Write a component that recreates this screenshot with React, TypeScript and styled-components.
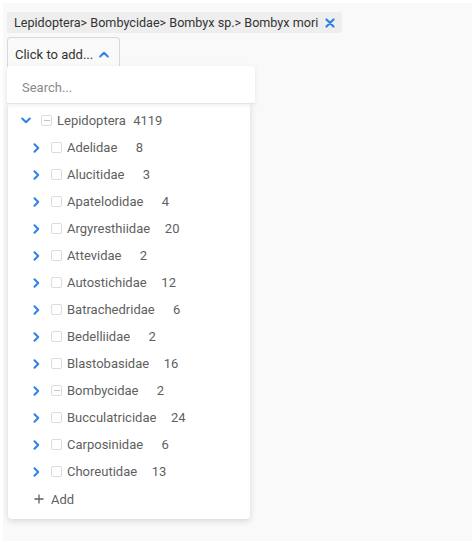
import React from "react";
import styled, { createGlobalStyle } from "styled-components";

const Global = createGlobalStyle`
  html, body { margin: 0; padding: 0; background: #ffffff; }
  body { font-family: Roboto, "Liberation Sans", Arial, sans-serif; }
  * { box-sizing: border-box; }
`;

const Page = styled.div`
  margin: 3px;
  min-height: 538px;
  width: 469px;
  background: #f9f9f9;
  padding: 9px 4px 0 4px;
  display: flex;
  flex-direction: column;
  align-items: flex-start;
`;

const Chip = styled.div`
  display: flex;
  align-items: center;
  height: 21px;
  padding: 0 7px;
  background: #eeeeee;
  border-radius: 2px;
  font-size: 12.6px;
  color: #333;
  gap: 7px;
  white-space: nowrap;
`;

const Dropdown = styled.div`
  margin-top: 4px;
  display: flex;
  flex-direction: column;
  align-items: flex-start;
`;

const Trigger = styled.div`
  height: 31px;
  width: 113px;
  border: 1px solid #d8d8d8;
  border-bottom: none;
  border-radius: 4px 4px 0 0;
  background: #f9f9f9;
  display: flex;
  align-items: center;
  padding: 3px 0 0 7px;
  gap: 6px;
  font-size: 13px;
  color: #333;
  white-space: nowrap;
`;

const SearchBox = styled.div`
  margin-top: -2px;
  width: 248px;
  height: 38px;
  background: #fff;
  border-radius: 3px 3px 0 0;
  border-bottom: 1px solid #e4e4e4;
  box-shadow: 0 1px 4px rgba(0, 0, 0, 0.08);
  display: flex;
  align-items: center;
  padding: 5px 15px 0 15px;
  font-size: 13px;
  color: #8a8a8a;
  position: relative;
  z-index: 1;
`;

const TreePanel = styled.div`
  margin-left: 1px;
  width: 242px;
  background: #fff;
  border-radius: 0 0 4px 4px;
  box-shadow: 0 2px 6px rgba(0, 0, 0, 0.14);
  padding: 3px 0 6px 0;
  display: flex;
  flex-direction: column;
`;

const Row = styled.div<{ $depth: number }>`
  height: 27px;
  display: flex;
  align-items: center;
  padding-left: ${(p) => 12 + p.$depth * 10}px;
  font-size: 13px;
  color: #5f5f5f;
`;

const Toggle = styled.span`
  width: 12px;
  height: 12px;
  display: flex;
  align-items: center;
  justify-content: center;
`;

const Box = styled.span<{ $partial?: boolean }>`
  width: 11px;
  height: 11px;
  margin-left: 9px;
  border: 1px solid #dcdcdc;
  border-radius: 2px;
  background: #fff;
  display: flex;
  align-items: center;
  justify-content: center;
  &::after {
    content: "";
    display: ${(p) => (p.$partial ? "block" : "none")};
    width: 6px;
    height: 1px;
    background: #c4c4c4;
  }
`;

const Name = styled.span`
  margin-left: 5px;
`;

const Count = styled.span`
  margin-left: 7px;
  min-width: 30px;
  text-align: center;
`;

const AddRow = styled.div`
  height: 28px;
  display: flex;
  align-items: center;
  padding-left: 26px;
  gap: 7px;
  font-size: 13px;
  color: #5f5f5f;
`;

const BLUE = "#2f80ed";

const ChevronRight = () => (
  <svg width="7" height="10" viewBox="0 0 7 10">
    <path d="M1.5 1.2 L5.2 5 L1.5 8.8" fill="none" stroke={BLUE} strokeWidth="2" strokeLinecap="round" strokeLinejoin="round" />
  </svg>
);

const ChevronDown = () => (
  <svg width="10" height="7" viewBox="0 0 10 7">
    <path d="M1.2 1.5 L5 5.2 L8.8 1.5" fill="none" stroke={BLUE} strokeWidth="2" strokeLinecap="round" strokeLinejoin="round" />
  </svg>
);

const ChevronUp = () => (
  <svg width="10" height="7" viewBox="0 0 10 7">
    <path d="M1.2 5.5 L5 1.8 L8.8 5.5" fill="none" stroke={BLUE} strokeWidth="2" strokeLinecap="round" strokeLinejoin="round" />
  </svg>
);

const Cross = () => (
  <svg width="10" height="10" viewBox="0 0 10 10">
    <path d="M1.5 1.5 L8.5 8.5 M8.5 1.5 L1.5 8.5" stroke={BLUE} strokeWidth="2.2" strokeLinecap="round" />
  </svg>
);

const Plus = () => (
  <svg width="10" height="10" viewBox="0 0 10 10">
    <path d="M5 0.5 V9.5 M0.5 5 H9.5" stroke="#5f5f5f" strokeWidth="1.3" />
  </svg>
);

const families: { name: string; count: number; partial?: boolean }[] = [
  { name: "Adelidae", count: 8 },
  { name: "Alucitidae", count: 3 },
  { name: "Apatelodidae", count: 4 },
  { name: "Argyresthiidae", count: 20 },
  { name: "Attevidae", count: 2 },
  { name: "Autostichidae", count: 12 },
  { name: "Batrachedridae", count: 6 },
  { name: "Bedelliidae", count: 2 },
  { name: "Blastobasidae", count: 16 },
  { name: "Bombycidae", count: 2, partial: true },
  { name: "Bucculatricidae", count: 24 },
  { name: "Carposinidae", count: 6 },
  { name: "Choreutidae", count: 13 },
];

export default function App() {
  return (
    <>
      <Global />
      <Page>
        <Chip>
          <span>Lepidoptera&gt; Bombycidae&gt; Bombyx sp.&gt; Bombyx mori</span>
          <Cross />
        </Chip>
        <Dropdown>
          <Trigger>
            <span>Click to add...</span>
            <ChevronUp />
          </Trigger>
          <SearchBox>Search...</SearchBox>
          <TreePanel>
            <Row $depth={0}>
              <Toggle>
                <ChevronDown />
              </Toggle>
              <Box $partial />
              <Name>Lepidoptera</Name>
              <Count>4119</Count>
            </Row>
            {families.map((f) => (
              <Row $depth={1} key={f.name}>
                <Toggle>
                  <ChevronRight />
                </Toggle>
                <Box $partial={f.partial} />
                <Name>{f.name}</Name>
                <Count>{f.count}</Count>
              </Row>
            ))}
            <AddRow>
              <Plus />
              <span>Add</span>
            </AddRow>
          </TreePanel>
        </Dropdown>
      </Page>
    </>
  );
}
